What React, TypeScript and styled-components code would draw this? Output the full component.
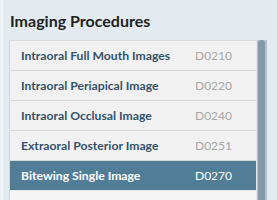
import React from "react";
import styled, { createGlobalStyle } from "styled-components";

const Global = createGlobalStyle`
  html, body { margin: 0; padding: 0; background: #e3ebf1; overflow: hidden; }
  body { font-family: "Lato", "Segoe UI", sans-serif; }
`;

const Page = styled.div`
  height: 200px;
  border-left: 3px solid #eef3f7;
  box-sizing: border-box;
  display: flex;
  flex-direction: column;
`;

const Title = styled.h2`
  margin: 0;
  padding: 11px 0 0 7px;
  height: 29px;
  box-sizing: border-box;
  font-size: 16px;
  font-weight: 700;
  color: #222;
  line-height: 19px;
`;

const Body = styled.div`
  display: flex;
  margin-left: 6px;
  flex: 1;
  min-height: 0;
  padding-top: 11px;
`;

const List = styled.ul`
  list-style: none;
  margin: 0;
  padding: 0;
  width: 248px;
  border-left: 1px solid #cfd6dc;
  border-top: 1px solid #d6dbe0;
  border-right: 1px solid #e4e8eb;
  box-sizing: border-box;
  background: #f5f5f5;
  overflow: hidden;
`;

const Row = styled.li<{ $selected?: boolean }>`
  display: grid;
  grid-template-columns: 1fr auto;
  align-items: center;
  height: 30px;
  box-sizing: border-box;
  padding: 0 24px 0 11px;
  border-bottom: 1px solid ${(p) => (p.$selected ? "#e4e8eb" : "#d6d9dc")};
  background: ${(p) => (p.$selected ? "#527d96" : "#f1f1f1")};
`;

const Name = styled.span<{ $selected?: boolean }>`
  font-size: 12.2px;
  font-weight: 700;
  color: ${(p) => (p.$selected ? "#ffffff" : "#33526a")};
  white-space: nowrap;
`;

const Code = styled.span<{ $selected?: boolean }>`
  font-size: 12px;
  color: ${(p) => (p.$selected ? "#ffffff" : "#a8a8a8")};
  font-weight: 400;
`;

const Track = styled.div`
  width: 10px;
  background: #b3c2cd;
  padding-left: 1px;
  padding-right: 2px;
  box-sizing: border-box;
`;

const Thumb = styled.div`
  height: 100%;
  background: #8299aa;
  border-radius: 4px 4px 0 0;
`;

const items = [
  ["Intraoral Full Mouth Images", "D0210"],
  ["Intraoral Periapical Image", "D0220"],
  ["Intraoral Occlusal Image", "D0240"],
  ["Extraoral Posterior Image", "D0251"],
  ["Bitewing Single Image", "D0270"],
];

export default function App() {
  return (
    <>
      <Global />
      <Page>
        <Title>Imaging Procedures</Title>
        <Body>
          <List>
            {items.map(([n, c], i) => (
              <Row key={c} $selected={i === 4}>
                <Name $selected={i === 4}>{n}</Name>
                <Code $selected={i === 4}>{c}</Code>
              </Row>
            ))}
          </List>
          <Track>
            <Thumb />
          </Track>
        </Body>
      </Page>
    </>
  );
}
